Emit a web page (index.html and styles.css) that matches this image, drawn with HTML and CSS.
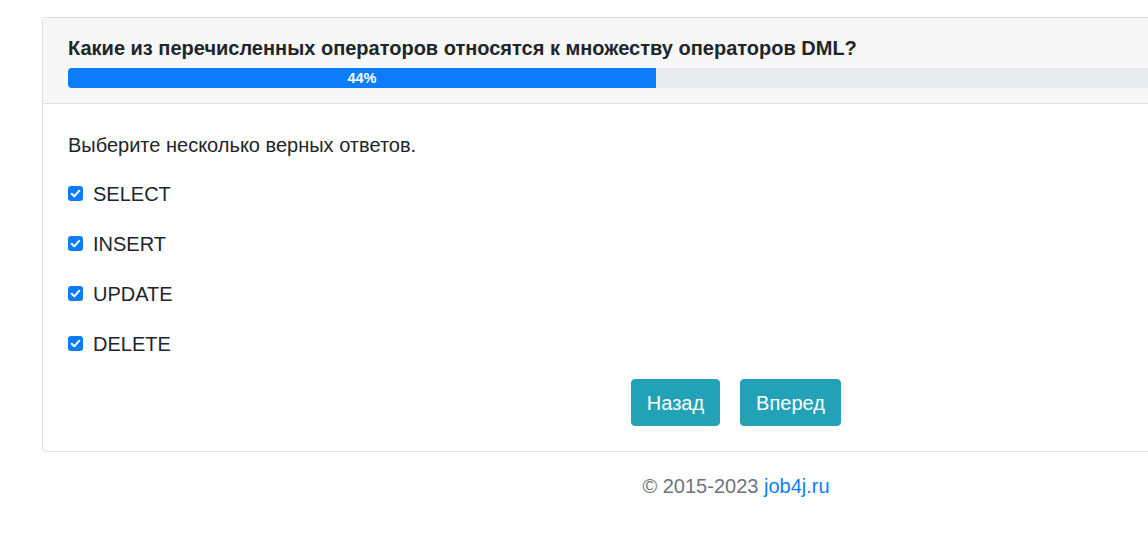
FILE: index.html
```html
<!DOCTYPE html>
<html lang="ru">
<head>
<meta charset="utf-8">
<title>Тест</title>
<link rel="stylesheet" href="styles.css">
</head>
<body>
<div class="page">
  <div class="card">
    <div class="card-header">
      <h5 class="question">Какие из перечисленных операторов относятся к множеству операторов DML?</h5>
      <div class="progress">
        <div class="progress-bar" style="width: 44%">44%</div>
      </div>
    </div>
    <div class="card-body">
      <p class="hint">Выберите несколько верных ответов.</p>
      <label class="option"><span class="box"><svg viewBox="0 0 15 15" width="15" height="15"><path d="M3.7 7.8 L6.3 10.3 L11.3 4.7" fill="none" stroke="#fff" stroke-width="2" stroke-linecap="round" stroke-linejoin="round"/></svg></span><span class="opt-text">SELECT</span></label>
      <label class="option"><span class="box"><svg viewBox="0 0 15 15" width="15" height="15"><path d="M3.7 7.8 L6.3 10.3 L11.3 4.7" fill="none" stroke="#fff" stroke-width="2" stroke-linecap="round" stroke-linejoin="round"/></svg></span><span class="opt-text">INSERT</span></label>
      <label class="option"><span class="box"><svg viewBox="0 0 15 15" width="15" height="15"><path d="M3.7 7.8 L6.3 10.3 L11.3 4.7" fill="none" stroke="#fff" stroke-width="2" stroke-linecap="round" stroke-linejoin="round"/></svg></span><span class="opt-text">UPDATE</span></label>
      <label class="option"><span class="box"><svg viewBox="0 0 15 15" width="15" height="15"><path d="M3.7 7.8 L6.3 10.3 L11.3 4.7" fill="none" stroke="#fff" stroke-width="2" stroke-linecap="round" stroke-linejoin="round"/></svg></span><span class="opt-text">DELETE</span></label>
      <div class="actions">
        <button class="btn btn-back">Назад</button>
        <button class="btn btn-next">Вперед</button>
      </div>
    </div>
  </div>
  <footer class="footer">© 2015-2023 <a href="#" class="footer-link">job4j.ru</a></footer>
</div>
</body>
</html>
```

FILE: styles.css
```css
html, body {
  margin: 0;
  padding: 0;
  overflow: hidden;
  background: #fff;
}
body {
  font-family: "Liberation Sans", Arial, sans-serif;
  font-size: 20px;
  line-height: 30px;
  color: #212529;
}
.page {
  width: 1472px;
  padding-top: 17px;
}
.card {
  margin: 0 42px;
  border: 1px solid #dfdfdf;
  border-radius: 4px;
  background: #fff;
}
.card-header {
  background: #f7f7f7;
  border-bottom: 1px solid #dfdfdf;
  border-radius: 4px 4px 0 0;
  padding: 15px 25px 15px 25px;
}
.question {
  margin: 0 0 5px 0;
  font-size: 20px;
  font-weight: bold;
  line-height: 30px;
}
.progress {
  height: 20px;
  background: #e9ecef;
  border-radius: 4px;
  overflow: hidden;
  display: flex;
}
.progress-bar {
  background: #0d7cf8;
  color: #fff;
  font-size: 14.5px;
  font-weight: bold;
  line-height: 20px;
  text-align: center;
}
.card-body {
  padding: 26px 25px 25px 25px;
}
.hint {
  margin: 0 0 19px 0;
}
.option {
  display: flex;
  align-items: center;
  height: 30px;
  margin-bottom: 20px;
}
.box {
  width: 15px;
  height: 15px;
  border-radius: 3px;
  background: #0d7cf8;
  display: flex;
  margin: 0 10px 1px 0;
}
.box svg {
  display: block;
}
.actions {
  display: flex;
  justify-content: center;
  gap: 20px;
}
.btn {
  font-family: "Liberation Sans", Arial, sans-serif;
  font-size: 20px;
  line-height: 30px;
  height: 47px;
  padding: 0;
  border: 1px solid #22a1b7;
  border-radius: 4px;
  background: #22a1b7;
  color: #fff;
}
.btn-back {
  width: 89px;
}
.btn-next {
  width: 101px;
}
.footer {
  margin-top: 19px;
  text-align: center;
  color: #6c757d;
  font-size: 20px;
}
.footer-link {
  color: #0d7cf8;
  text-decoration: none;
}
```
